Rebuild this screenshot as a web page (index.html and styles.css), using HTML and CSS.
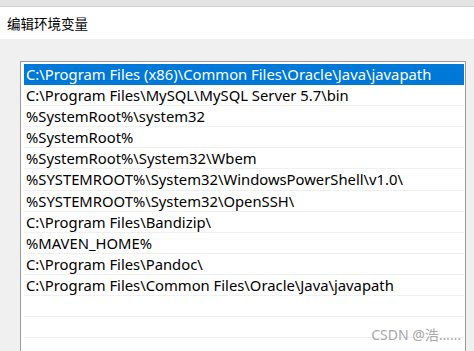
FILE: index.html
```html
<!DOCTYPE html>
<html lang="zh-CN">
<head>
    <meta charset="UTF-8">
    <title>编辑环境变量</title>
    <link rel="stylesheet" href="styles.css">
</head>
<body>
    <div class="topbar"></div>
    <div class="titlebar">编辑环境变量</div>

    <div class="content">
        <div class="path-list">
            <div class="row selected">C:\Program Files (x86)\Common Files\Oracle\Java\javapath</div>
            <div class="row">C:\Program Files\MySQL\MySQL Server 5.7\bin</div>
            <div class="row">%SystemRoot%\system32</div>
            <div class="row">%SystemRoot%</div>
            <div class="row">%SystemRoot%\System32\Wbem</div>
            <div class="row">%SYSTEMROOT%\System32\WindowsPowerShell\v1.0\</div>
            <div class="row">%SYSTEMROOT%\System32\OpenSSH\</div>
            <div class="row">C:\Program Files\Bandizip\</div>
            <div class="row">%MAVEN_HOME%</div>
            <div class="row">C:\Program Files\Pandoc\</div>
            <div class="row">C:\Program Files\Common Files\Oracle\Java\javapath</div>
            <div class="row"></div>
            <div class="row"></div>
        </div>
    </div>

    <div class="watermark">CSDN @浩……</div>
</body>
</html>
```

FILE: styles.css
```css
* {
    margin: 0;
    padding: 0;
    box-sizing: border-box;
}
html, body {
    height: 100%;
    overflow: hidden;
}
body {
    background-color: #f0f0f0;
    font-family: "Noto Sans", "Noto Sans CJK SC", sans-serif;
    color: #000;
}

.topbar {
    height: 7px;
    background-color: #e4e4e4;
    border-bottom: 1px solid #cfcfcf;
}

.titlebar {
    height: 32px;
    line-height: 33px;
    padding-left: 7px;
    background-color: #fff;
    font-family: "Noto Sans CJK SC", sans-serif;
    font-size: 13.5px;
}

.content {
    padding: 22px 0 0 20px;
}

.path-list {
    width: 446px;
    height: 290px;
    overflow: hidden;
    background-color: #fff;
    border: 1px solid #9a9a9a;
    border-bottom: none;
    padding: 2px 1px 0 3px;
}

.row {
    height: 21.1px;
    line-height: 20px;
    padding-left: 2px;
    border-bottom: 1px solid #f0f0f0;
    font-size: 14.8px;
    white-space: nowrap;
}

.row.selected {
    background-color: #0078d7;
    color: #fff;
    border-bottom-color: #0078d7;
}

.watermark {
    position: absolute;
    right: 13px;
    bottom: 7px;
    font-family: "Noto Sans", "Noto Sans CJK SC", sans-serif;
    font-size: 14px;
    color: #a8a8a8;
}
```
